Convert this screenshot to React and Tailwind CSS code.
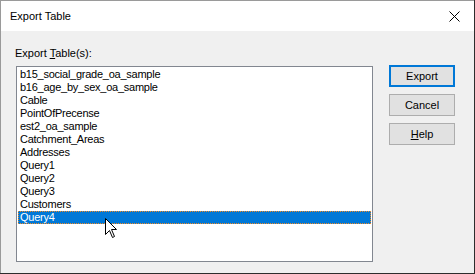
import React from 'react';

const tables = [
    "b15_social_grade_oa_sample",
    "b16_age_by_sex_oa_sample",
    "Cable",
    "PointOfPrecense",
    "est2_oa_sample",
    "Catchment_Areas",
    "Addresses",
    "Query1",
    "Query2",
    "Query3",
    "Customers",
    "Query4",
];

function DialogButton({ children, focused }) {
    return (
        <button
            className={
                focused
                    ? "w-[66px] h-[22px] bg-[#e1e1e1] border-2 border-[#0078d7] text-[11px] leading-none text-black"
                    : "w-[66px] h-[22px] bg-[#e1e1e1] border border-[#adadad] text-[11px] leading-none text-black"
            }
        >
            {children}
        </button>
    );
}

export default function App() {
    const selected = "Query4";

    return (
        <div
            className="w-[475px] h-[274px] bg-[#2d2d2d] overflow-hidden"
            style={{ fontFamily: '"Liberation Sans", Arial, sans-serif' }}
        >
            <div className="relative w-[474px] h-[273px] bg-[#f0f0f0] border-l border-t border-[#9a9a9a] flex flex-col">
                {/* title bar */}
                <div className="h-[30px] bg-white flex items-center justify-between pl-[9px] pr-[10px] shrink-0">
                    <span className="text-[11px] text-black">Export Table</span>
                    <svg width="11" height="11" viewBox="0 0 11 11" className="mr-[4px]">
                        <path d="M0.5 0.5L10.5 10.5M10.5 0.5L0.5 10.5" stroke="#000" strokeWidth="1" />
                    </svg>
                </div>

                {/* body */}
                <div className="flex pl-[15px] pt-[16px]">
                    <div className="flex flex-col">
                        <label className="text-[11px] leading-[13px] text-black ml-[-1px]">
                            Export <u className="underline-offset-1">T</u>able(s):
                        </label>
                        <div className="mt-[6px] w-[357px] h-[196px] bg-white border border-[#828790] p-px">
                            {tables.map((name) =>
                                name === selected ? (
                                    <div
                                        key={name}
                                        className="h-[13px] leading-[13px] text-[11px] tracking-[-0.25px] text-white bg-[#0078d7] outline-1 outline-dotted outline-[#f08a24] -outline-offset-1 pl-[2px]"
                                    >
                                        {name}
                                    </div>
                                ) : (
                                    <div key={name} className="h-[13px] leading-[13px] text-[11px] tracking-[-0.25px] text-black pl-[2px]">
                                        {name}
                                    </div>
                                )
                            )}
                        </div>
                    </div>

                    <div className="flex flex-col gap-[7px] ml-[16px] mt-[18px]">
                        <DialogButton focused>Export</DialogButton>
                        <DialogButton>Cancel</DialogButton>
                        <DialogButton>
                            <u className="underline-offset-1">H</u>elp
                        </DialogButton>
                    </div>
                </div>

                {/* mouse pointer */}
                <svg
                    className="absolute left-[104px] top-[217px]"
                    width="13"
                    height="21"
                    viewBox="0 0 13 21"
                >
                    <path
                        d="M0.5 0.5 L0.5 16.5 L4.5 12.5 L7.5 19.5 L9.5 18.5 L6.5 11.5 L11.5 11.5 Z"
                        fill="#fff"
                        stroke="#000"
                        strokeWidth="1"
                        strokeLinejoin="miter"
                    />
                </svg>
            </div>
        </div>
    );
}
